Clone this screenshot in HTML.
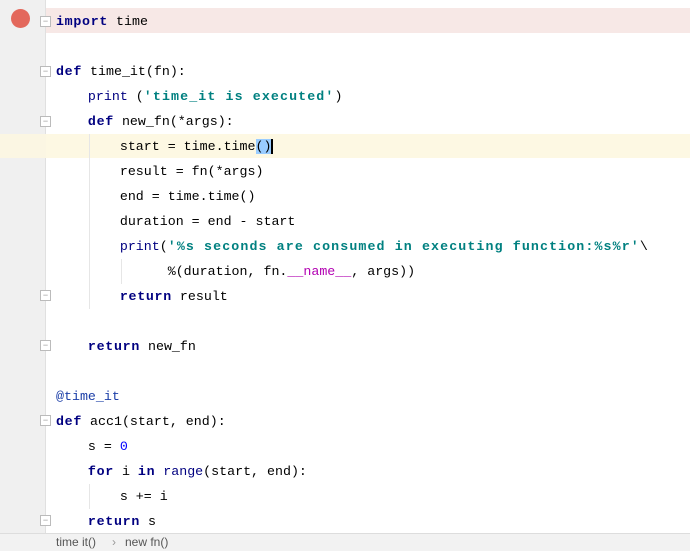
<!DOCTYPE html>
<html><head><style>
body{margin:0;width:690px;height:550px;overflow:hidden;background:#fff;font-family:"Liberation Mono",monospace;font-size:13.3px;position:relative}
.g{position:absolute;left:0;top:0;width:45px;height:533px;background:#f0f0f0;border-right:1px solid #e0e0e0}
.l{position:absolute;left:56px;height:25px;line-height:25px;white-space:pre;color:#000}
.k{color:#000080;font-weight:bold;letter-spacing:0.7px}
.s{color:#008080;font-weight:bold;letter-spacing:1.1px}
.n{color:#0000ff}
.m{color:#b200b2}
.b{color:#000080}
.f{position:absolute;left:40px;width:9px;height:9px;border:1px solid #bbb;background:#fff;font-size:9px;line-height:8px;text-align:center;color:#999;font-family:"Liberation Sans",sans-serif}
.ig{position:absolute;width:1px;background:#e6e6e6}
.st{position:absolute;left:0;top:533px;width:690px;height:17px;background:#f2f2f2;border-top:1px solid #ddd;font-family:"Liberation Sans",sans-serif;font-size:12px;line-height:17px;color:#555}
</style></head><body>
<div class="g"></div>
<div style="position:absolute;left:46px;top:8px;width:644px;height:25px;background:#f7e8e6"></div>
<div style="position:absolute;left:0;top:134px;width:46px;height:24px;background:#fbf6e3"></div>
<div style="position:absolute;left:46px;top:134px;width:644px;height:24px;background:#fdf8e3"></div>
<div style="position:absolute;left:11px;top:9px;width:19px;height:19px;border-radius:50%;background:#e3685c"></div>
<div class="ig" style="left:89px;top:134px;height:175px"></div>
<div class="ig" style="left:121px;top:259px;height:25px"></div>
<div class="ig" style="left:89px;top:484px;height:25px"></div>
<div class="f" style="top:16px">−</div>
<div class="f" style="top:66px">−</div>
<div class="f" style="top:116px">−</div>
<div class="f" style="top:290px">−</div>
<div class="f" style="top:340px">−</div>
<div class="f" style="top:415px">−</div>
<div class="f" style="top:515px">−</div>
<div class="l" style="top:9px"><span class="k">import</span> time</div>
<div class="l" style="top:59px"><span class="k">def</span> time_it(fn):</div>
<div class="l" style="top:84px">    <span class="b">print</span> (<span class="s">'time_it is executed'</span>)</div>
<div class="l" style="top:109px">    <span class="k">def</span> new_fn(*args):</div>
<div class="l" style="top:134px">        start = time.time<span style="background:#99ccff">()</span><span style="border-left:2px solid #000"></span></div>
<div class="l" style="top:159px">        result = fn(*args)</div>
<div class="l" style="top:184px">        end = time.time()</div>
<div class="l" style="top:209px">        duration = end - start</div>
<div class="l" style="top:234px">        <span class="b">print</span>(<span class="s">'%s seconds are consumed in executing function:%s%r'</span>\</div>
<div class="l" style="top:259px">              %(duration, fn.<span class="m">__name__</span>, args))</div>
<div class="l" style="top:284px">        <span class="k">return</span> result</div>
<div class="l" style="top:334px">    <span class="k">return</span> new_fn</div>
<div class="l" style="top:384px;color:#1c3fa8">@time_it</div>
<div class="l" style="top:409px"><span class="k">def</span> acc1(start, end):</div>
<div class="l" style="top:434px">    s = <span class="n">0</span></div>
<div class="l" style="top:459px">    <span class="k">for</span> i <span class="k">in</span> <span class="b">range</span>(start, end):</div>
<div class="l" style="top:484px">        s += i</div>
<div class="l" style="top:509px">    <span class="k">return</span> s</div>
<div class="st"><span style="position:absolute;left:56px">time it()</span><span style="position:absolute;left:112px;color:#999">›</span><span style="position:absolute;left:125px">new fn()</span></div>
</body></html>
